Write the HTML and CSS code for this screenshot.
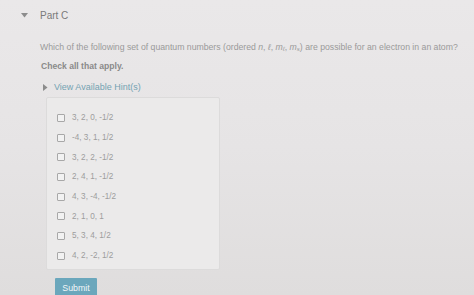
FILE: index.html
```html
<!DOCTYPE html>
<html>
<head>
<meta charset="utf-8">
<link rel="stylesheet" href="styles.css">
</head>
<body>
<div class="page">
  <div class="header">
    <svg class="caret" width="7" height="5" viewBox="0 0 7 5"><polygon points="0,0 7,0 3.5,4.5" fill="#8c8c8c"/></svg>
    <span class="part">Part C</span>
  </div>
  <div class="content">
    <p class="question">Which of the following set of quantum numbers (ordered <i>n</i>, <i>ℓ</i>, <i>m<sub>ℓ</sub></i>, <i>m<sub>s</sub></i>) are possible for an electron in an atom?</p>
    <p class="check">Check all that apply.</p>
    <div class="hint"><svg class="hcaret" width="5" height="7" viewBox="0 0 5 7"><polygon points="0,0 4.5,3.5 0,7" fill="#8c8c8c"/></svg><span>View Available Hint(s)</span></div>
    <div class="box">
      <div class="opt"><span class="cb"></span>3, 2, 0, -1/2</div>
      <div class="opt"><span class="cb"></span>-4, 3, 1, 1/2</div>
      <div class="opt"><span class="cb"></span>3, 2, 2, -1/2</div>
      <div class="opt"><span class="cb"></span>2, 4, 1, -1/2</div>
      <div class="opt"><span class="cb"></span>4, 3, -4, -1/2</div>
      <div class="opt"><span class="cb"></span>2, 1, 0, 1</div>
      <div class="opt"><span class="cb"></span>5, 3, 4, 1/2</div>
      <div class="opt"><span class="cb"></span>4, 2, -2, 1/2</div>
    </div>
    <div class="submit">Submit</div>
  </div>
</div>
</body>
</html>
```
FILE: styles.css
```css
html, body {
  margin: 0;
  padding: 0;
}
body {
  width: 474px;
  height: 295px;
  overflow: hidden;
  font-family: "Liberation Sans", Arial, sans-serif;
  background: linear-gradient(180deg, #eae8e9 0%, #e6e4e5 50%, #dfdddd 100%);
}
.page {
  padding: 8px 0 0 0;
}
.header {
  display: flex;
  align-items: center;
  height: 14px;
  padding-left: 21px;
}
.caret {
  margin-right: 12px;
}
.part {
  font-size: 10px;
  color: #7a7a7a;
}
.content {
  padding-left: 40px;
}
.question {
  margin: 19px 0 0 0;
  font-size: 8.7px;
  color: #9a9a9a;
  white-space: nowrap;
  height: 12px;
  line-height: 12px;
}
.question sub {
  font-size: 6px;
  line-height: 0;
  vertical-align: -1px;
}
.check {
  margin: 7px 0 0 1px;
  font-size: 8.6px;
  font-weight: bold;
  color: #8a8a8a;
  line-height: 12px;
}
.hint {
  margin: 9px 0 0 3px;
  display: flex;
  align-items: center;
  font-size: 9px;
  color: #74a2b2;
  line-height: 12px;
}
.hcaret {
  margin-right: 6px;
}
.box {
  box-sizing: border-box;
  margin: 4px 0 0 6px;
  width: 174px;
  height: 173px;
  padding-top: 10px;
  border: 1px solid #dcdbdb;
  background: #ebeaea;
  border-radius: 2px;
}
.opt {
  display: flex;
  align-items: center;
  height: 19.7px;
  padding-left: 10px;
  font-size: 8.2px;
  color: #9d9d9d;
}
.cb {
  width: 6px;
  height: 6px;
  border: 1px solid #a8a8a8;
  border-radius: 1px;
  background: #f2f2f2;
  margin-right: 7px;
}
.submit {
  margin: 8px 0 0 15px;
  width: 42px;
  height: 20px;
  background: #6ba7bc;
  color: #f2f6f8;
  font-size: 8.8px;
  display: flex;
  align-items: center;
  justify-content: center;
  border-radius: 1px;
}
```
